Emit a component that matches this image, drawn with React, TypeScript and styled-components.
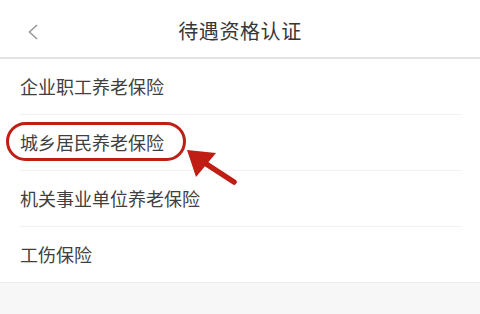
import React from "react";
import styled, { createGlobalStyle } from "styled-components";

const Global = createGlobalStyle`
  html, body { margin: 0; padding: 0; background: #f7f7f7; }
  body { font-family: "Noto Sans CJK SC", "Noto Sans", sans-serif; }
`;

const Page = styled.div`
  position: relative;
  width: 480px;
  height: 314px;
  background: #f7f7f7;
  overflow: hidden;
`;

const Header = styled.header`
  box-sizing: border-box;
  height: 59px;
  padding-top: 4px;
  background: #fff;
  border-bottom: 2px solid #e2e2e2;
  display: grid;
  grid-template-columns: 60px 1fr 60px;
  align-items: center;
`;

const Back = styled.div`
  display: flex;
  align-items: center;
  justify-content: flex-start;
  padding-left: 27px;
  padding-top: 2px;
`;

const Title = styled.h1`
  margin: 0;
  text-align: center;
  font-size: 20px;
  font-weight: 400;
  color: #363636;
  letter-spacing: 0.6px;
`;

const List = styled.ul`
  list-style: none;
  margin: 0;
  padding: 0 18px 0 20px;
  background: #fff;
  border-bottom: 1px solid #ececec;
`;

const Item = styled.li`
  box-sizing: border-box;
  height: 56px;
  padding-bottom: 2px;
  display: flex;
  align-items: center;
  font-size: 18px;
  color: #404040;
  border-top: 1px solid #f2f2f2;
  &:first-child { border-top: none; height: 55px; }
`;

const Overlay = styled.svg`
  position: absolute;
  left: 0;
  top: 0;
  pointer-events: none;
`;

const items = ["企业职工养老保险", "城乡居民养老保险", "机关事业单位养老保险", "工伤保险"];

export default function App() {
  return (
    <Page>
      <Global />
      <Header>
        <Back>
          <svg width="12" height="16" viewBox="0 0 12 16">
            <path d="M10 1 L2.5 8 L10 15" fill="none" stroke="#9a9a9a" strokeWidth="1.6" />
          </svg>
        </Back>
        <Title>待遇资格认证</Title>
        <div />
      </Header>
      <List>
        {items.map((t) => (
          <Item key={t}>{t}</Item>
        ))}
      </List>
      <Overlay width="480" height="314" viewBox="0 0 480 314">
        <rect x="7.5" y="123.5" width="177" height="36" rx="18" ry="18" fill="none" stroke="#c01d15" strokeWidth="3" />
        <line x1="194" y1="156" x2="234" y2="182" stroke="#c01d15" strokeWidth="5.5" strokeLinecap="round" />
        <polygon points="187,150 216,153 196,177" fill="#c01d15" />
      </Overlay>
    </Page>
  );
}
